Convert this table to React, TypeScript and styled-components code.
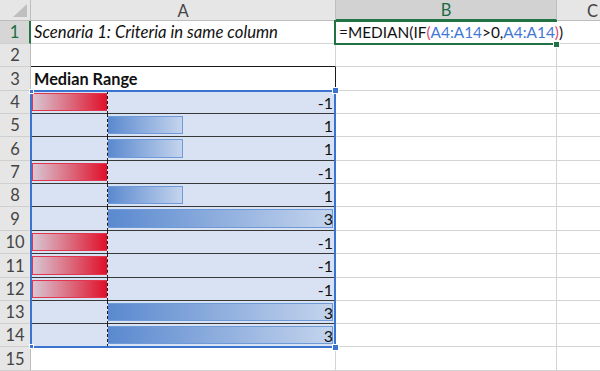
import styled, { createGlobalStyle } from "styled-components";

const GlobalStyle = createGlobalStyle`
  html, body {
    margin: 0;
    padding: 0;
    background: #ffffff;
    overflow: hidden;
  }
  body {
    font-family: Lato, "Liberation Sans", sans-serif;
  }
`

const rowHeights = [23, 23, 24, 23, 23, 24, 23, 23, 24, 23, 24, 23, 23, 23, 24];
const values = [-1, 1, 1, -1, 1, 3, -1, -1, -1, 3, 3];
const UNIT = 75;
const REF = "#3b73d1";
const ACTIVE = "#217346";

const Sheet = styled.div`
    position: relative;
    display: grid;
    grid-template-columns: 31px 305px 221px 72px;
    grid-template-rows: 21px ${rowHeights.map((h) => `${h}px`).join(" ")};
    width: 629px;
    font-size: 16px;
    color: #111;
`

const Corner = styled.div`
    position: relative;
    background: #e6e6e6;
    border-right: 1px solid #bdbdbd;
    border-bottom: 1px solid #bdbdbd;
    box-sizing: border-box;
    &::after {
        content: "";
        position: absolute;
        right: 3px;
        bottom: 3px;
        width: 0;
        height: 0;
        border-left: 14px solid transparent;
        border-bottom: 13px solid #bfbfbf;
    }
`

const ColHead = styled.div<{ $active?: boolean }>`
    display: flex;
    align-items: center;
    justify-content: center;
    box-sizing: border-box;
    background: ${(p) => (p.$active ? "#d2d2d2" : "#e6e6e6")};
    color: ${(p) => (p.$active ? "#1e6b45" : "#444")};
    border-right: 1px solid #bdbdbd;
    border-bottom: ${(p) => (p.$active ? `2px solid ${ACTIVE}` : "1px solid #bdbdbd")};
    font-size: 16.5px;
    padding-top: 1px;
`

const RowHead = styled.div<{ $active?: boolean }>`
    display: flex;
    align-items: center;
    justify-content: center;
    box-sizing: border-box;
    background: ${(p) => (p.$active ? "#d6d6d6" : "#e6e6e6")};
    color: ${(p) => (p.$active ? "#1e6b45" : "#444")};
    border-right: ${(p) => (p.$active ? `2px solid ${ACTIVE}` : "1px solid #bdbdbd")};
    border-bottom: 1px solid #cfcfcf;
    font-size: 16.5px;
`

const Cell = styled.div<{ $top?: string; $right?: string; $bottom?: string }>`
    display: flex;
    align-items: center;
    box-sizing: border-box;
    padding: 0 3px;
    white-space: nowrap;
    border-right: 1px solid ${(p) => p.$right || "#d4d4d4"};
    border-bottom: 1px solid ${(p) => p.$bottom || "#d4d4d4"};
    ${(p) => (p.$top ? `border-top: 1px solid ${p.$top};` : "")}
`

const Note = styled.span`
    font-style: italic;
    font-size: 16.7px;
`

const Heading = styled.span`
    font-weight: 700;
    font-size: 16.3px;
`

const EditCell = styled(Cell)`
    position: relative;
    z-index: 2;
    overflow: visible;
    border-right-color: transparent;
    &::after {
        content: "";
        position: absolute;
        left: -2px;
        top: -1px;
        right: -1px;
        bottom: -2px;
        border: 2px solid ${ACTIVE};
        border-right: none;
        pointer-events: none;
    }
`

const Handle = styled.span<{ $color: string; $size?: number }>`
    position: absolute;
    width: ${(p) => p.$size || 5}px;
    height: ${(p) => p.$size || 5}px;
    background: ${(p) => p.$color};
    border: 1px solid #fff;
    z-index: 3;
`

const Formula = styled.span`
    background: #fff;
    padding-right: 2px;
    font-size: 15.4px;
`

const Ref = styled.span`
    color: #3f78d4;
`

const Paren = styled.span`
    color: #e0457b;
`

const DataCell = styled.div<{ $last?: boolean }>`
    position: relative;
    display: flex;
    align-items: center;
    justify-content: flex-end;
    box-sizing: border-box;
    padding-right: 2px;
    background: #d9e2f3;
    border-right: 1px solid #d4d4d4;
    border-bottom: 1px solid ${(p) => (p.$last ? "#d4d4d4" : "#383838")};
`

const Track = styled.div`
    position: absolute;
    left: 1px;
    right: 1px;
    top: 2px;
    bottom: 2px;
    display: flex;
`

const NegSide = styled.div`
    width: 75px;
    display: flex;
    justify-content: flex-end;
`

const PosSide = styled.div`
    flex: 1;
    display: flex;
    padding-left: 1px;
`

const Bar = styled.div<{ $neg?: boolean }>`
    box-sizing: border-box;
    height: 100%;
    border: 1px solid ${(p) => (p.$neg ? "#e0364e" : "#6e9ad8")};
    ${(p) => (p.$neg ? "border-right: none;" : "border-left: none;")}
    background: ${(p) =>
        p.$neg
            ? "linear-gradient(to right, #d9c6d3, #df1029)"
            : "linear-gradient(to right, #5a89cf, #c4d4ed)"};
`

const Axis = styled.div`
    position: absolute;
    left: 76px;
    top: 0;
    bottom: -1px;
    border-left: 1px dashed #1a1a1a;
`

const Value = styled.span`
    position: relative;
    z-index: 1;
    font-size: 16px;
`

const RefBox = styled.div`
    position: absolute;
    left: 30px;
    top: 90px;
    width: 306px;
    height: 258px;
    box-sizing: border-box;
    border: 2px solid ${REF};
    pointer-events: none;
    z-index: 4;
`

function DataRow({ value, last }: { value: number; last?: boolean }) {
    return (
        <DataCell $last={last}>
            <Track>
                <NegSide>{value < 0 && <Bar $neg style={{ width: -value * UNIT }} />}</NegSide>
                <PosSide>{value > 0 && <Bar style={{ width: value * UNIT }} />}</PosSide>
            </Track>
            <Axis />
            <Value>{value}</Value>
        </DataCell>
    )
}

function App() {
    return (
        <>
            <GlobalStyle />
            <Sheet>
                <Corner />
                <ColHead>A</ColHead>
                <ColHead $active>B</ColHead>
                <ColHead>C</ColHead>

                <RowHead $active>1</RowHead>
                <Cell><Note>Scenaria 1: Criteria in same column</Note></Cell>
                <EditCell>
                    <Formula>
                        =MEDIAN(IF<Paren>(</Paren><Ref>A4:A14</Ref>&gt;0,<Ref>A4:A14</Ref><Paren>)</Paren>)
                    </Formula>
                    <Handle $color={ACTIVE} style={{ right: -4, bottom: -5 }} />
                </EditCell>
                <Cell />

                <RowHead>2</RowHead>
                <Cell $bottom="#1a1a1a" />
                <Cell />
                <Cell />

                <RowHead>3</RowHead>
                <Cell $right="#1a1a1a"><Heading>Median Range</Heading></Cell>
                <Cell />
                <Cell />

                {values.map((v, i) => (
                    <>
                        <RowHead key={`h${i}`}>{i + 4}</RowHead>
                        <DataRow key={`a${i}`} value={v} last={i === values.length - 1} />
                        <Cell key={`b${i}`} />
                        <Cell key={`c${i}`} />
                    </>
                ))}

                <RowHead>15</RowHead>
                <Cell />
                <Cell />
                <Cell />

                <RefBox>
                    <Handle $color={REF} $size={3} style={{ left: -3, top: -3 }} />
                    <Handle $color={REF} style={{ right: -5, top: -5 }} />
                    <Handle $color={REF} $size={3} style={{ left: -3, bottom: -3 }} />
                    <Handle $color={REF} style={{ right: -5, bottom: -5 }} />
                </RefBox>
            </Sheet>
        </>
    )
}

export default App;
